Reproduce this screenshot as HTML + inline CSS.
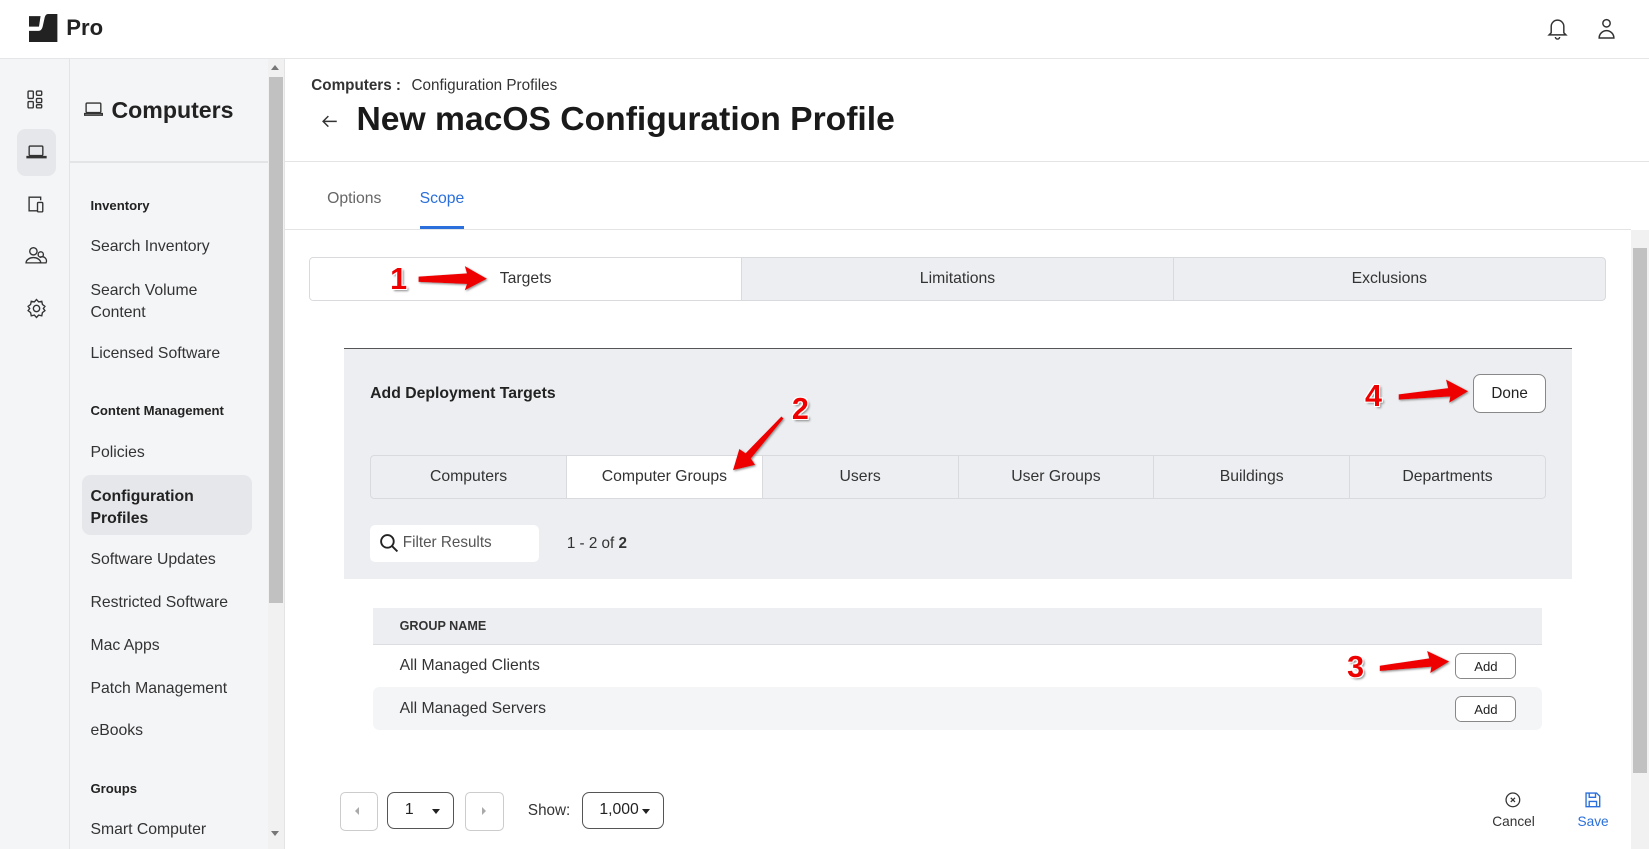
<!DOCTYPE html>
<html><head><meta charset="utf-8">
<style>
html,body{margin:0;padding:0;overflow:hidden;background:#fff}
body{width:1568px;height:807px;zoom:1.05166;position:relative;font-family:"Liberation Sans",Arial,sans-serif;color:#222}
.a{position:absolute}
.t{font-size:15px;color:#333;white-space:nowrap}
.seg{display:flex;border:1px solid #d8dadd;border-radius:4px;overflow:hidden;background:#eceef1}
.seg div{flex:1;display:flex;align-items:center;justify-content:center;font-size:15px;color:#333;border-left:1px solid #d8dadd}
.seg div:first-child{border-left:none}
.seg .on{background:#fff}
.btn{border:1px solid #888;border-radius:7px;background:#fff;display:flex;align-items:center;justify-content:center;color:#222}
.num{font:bold 29px "Liberation Sans",sans-serif;color:#e00;text-shadow:1px 1px 0 #fff,-1px -1px 0 #fff,1px -1px 0 #fff,-1px 1px 0 #fff,2px 2px 2px #888}
</style></head><body>
<!-- header -->
<div class="a" style="left:0;top:0;width:1568px;height:55px;border-bottom:1px solid #e5e6e8"></div>
<svg class="a" style="left:28px;top:13px" width="28" height="27" viewBox="0 0 28 27"><path d="M0 2H11L9.5 12H0Z" fill="#222"/><path d="M18 0H27V27H0V16H9Q12 16 13 12L15 3Q16 0 18 0Z" fill="#222"/></svg>
<div class="a" style="left:63px;top:14px;font-size:21px;font-weight:bold">Pro</div>
<svg class="a" style="left:1471px;top:16px" width="20" height="22" viewBox="0 0 20 22" fill="none" stroke="#333" stroke-width="1.4"><path d="M4 15V9a6 6 0 0112 0v6l2 2H2z"/><path d="M8 19a2 2 0 004 0"/></svg>
<svg class="a" style="left:1518px;top:16px" width="20" height="22" viewBox="0 0 20 22" fill="none" stroke="#333" stroke-width="1.4"><circle cx="10" cy="6" r="3.5"/><path d="M3 20a7 7 0 0114 0z"/></svg>
<!-- rail -->
<div class="a" style="left:0;top:56px;width:66px;height:751px;background:#f4f5f7;border-right:1px solid #e3e4e6"></div>
<div class="a" style="left:16px;top:123px;width:37px;height:44px;background:#e6e7ea;border-radius:8px"></div>
<svg class="a" style="left:26px;top:86px" width="16" height="20" viewBox="0 0 16 20" fill="none" stroke="#333" stroke-width="1.3"><rect x="1" y="1" width="5" height="7" rx="1"/><rect x="9" y="1" width="5" height="4" rx="1"/><rect x="1" y="11" width="5" height="6" rx="1"/><rect x="9" y="8" width="5" height="4" rx="1"/><rect x="9" y="14" width="5" height="3" rx="1"/></svg>
<svg class="a" style="left:25px;top:137px" width="20" height="16" viewBox="0 0 20 16" fill="none" stroke="#333" stroke-width="1.3"><rect x="3" y="2" width="13" height="9" rx="1"/><path d="M1 12h18v1H1z"/></svg>
<svg class="a" style="left:26px;top:184px" width="18" height="20" viewBox="0 0 18 20" fill="none" stroke="#333" stroke-width="1.3"><path d="M10 16H2V3h11v3"/><rect x="10" y="8" width="5" height="9" rx="1"/></svg>
<svg class="a" style="left:24px;top:233px" width="22" height="20" viewBox="0 0 22 20" fill="none" stroke="#333" stroke-width="1.3"><circle cx="8" cy="6" r="3.5"/><circle cx="15" cy="9" r="2.5"/><path d="M1 17a7 5 0 0114 0z"/><path d="M13 17h7a4 4 0 00-6-5"/></svg>
<svg class="a" style="left:25px;top:283px" width="20" height="20" viewBox="0 0 20 20" fill="none" stroke="#333" stroke-width="1.3"><circle cx="10" cy="10" r="3"/><path d="M10 1.5l2 2.2 3-.6.6 3 2.4 1.9-1.5 2 1.5 2-2.4 1.9-.6 3-3-.6-2 2.2-2-2.2-3 .6-.6-3L2 12l1.5-2L2 8l2.4-1.9.6-3 3 .6z"/></svg>
<!-- side nav -->
<div class="a" style="left:67px;top:56px;width:188px;height:751px;background:#f4f5f7"></div>
<div class="a" style="left:67px;top:153px;width:188px;height:2px;background:#e3e4e6"></div>
<svg class="a" style="left:80px;top:97px" width="18" height="14" viewBox="0 0 18 14" fill="none" stroke="#333" stroke-width="1.3"><rect x="2" y="1" width="14" height="9" rx="1"/><path d="M0.5 11h17v1.5H.5z"/></svg>
<div class="a" style="left:106px;top:92px;font-size:22px;font-weight:bold">Computers</div>
<div class="a" style="left:86px;top:188px;font-size:12.5px;font-weight:bold">Inventory</div>
<div class="a t" style="left:86px;top:226px">Search Inventory</div>
<div class="a t" style="left:86px;top:266px;line-height:21px">Search Volume<br>Content</div>
<div class="a t" style="left:86px;top:328px">Licensed Software</div>
<div class="a" style="left:86px;top:383px;font-size:12.5px;font-weight:bold">Content Management</div>
<div class="a t" style="left:86px;top:422px">Policies</div>
<div class="a" style="left:78px;top:452px;width:162px;height:57px;background:#e6e7ea;border-radius:8px"></div>
<div class="a" style="left:86px;top:462px;font-size:15px;font-weight:bold;line-height:21px">Configuration<br>Profiles</div>
<div class="a t" style="left:86px;top:524px">Software Updates</div>
<div class="a t" style="left:86px;top:565px">Restricted Software</div>
<div class="a t" style="left:86px;top:606px">Mac Apps</div>
<div class="a t" style="left:86px;top:647px">Patch Management</div>
<div class="a t" style="left:86px;top:687px">eBooks</div>
<div class="a" style="left:86px;top:743px;font-size:12.5px;font-weight:bold">Groups</div>
<div class="a t" style="left:86px;top:781px">Smart Computer</div>
<div class="a" style="left:255px;top:56px;width:15px;height:751px;background:#f1f1f1"></div>
<div class="a" style="left:256px;top:73px;width:13px;height:500px;background:#c1c1c1"></div>
<div class="a" style="left:258px;top:62px;width:0;height:0;border:4px solid transparent;border-bottom:5px solid #777;border-top:0"></div>
<div class="a" style="left:258px;top:790px;width:0;height:0;border:4px solid transparent;border-top:5px solid #777;border-bottom:0"></div>
<div class="a" style="left:270px;top:56px;width:1px;height:751px;background:#e3e4e6"></div>
<!-- main -->
<div class="a" style="left:296px;top:73px;font-size:14.5px"><b style="color:#333">Computers :</b> <span style="color:#333;margin-left:6px">Configuration Profiles</span></div>
<svg class="a" style="left:305px;top:108px" width="16" height="14" viewBox="0 0 16 14" fill="none" stroke="#333" stroke-width="1.4"><path d="M15 7H2M7 2L2 7l5 5"/></svg>
<div class="a" style="left:339px;top:96px;font-size:32px;font-weight:bold;color:#1a1a1a">New macOS Configuration Profile</div>
<div class="a" style="left:271px;top:153px;width:1297px;height:1px;background:#e3e4e6"></div>
<div class="a" style="left:311px;top:181px;font-size:15px;color:#666">Options</div>
<div class="a" style="left:399px;top:181px;font-size:15px;color:#2a6fdb">Scope</div>
<div class="a" style="left:399px;top:215px;width:42px;height:3px;background:#2a6fdb"></div>
<div class="a" style="left:271px;top:218px;width:1280px;height:1px;background:#e3e4e6"></div>
<div class="a seg" style="left:294px;top:244px;width:1231px;height:40px"><div class="on">Targets</div><div>Limitations</div><div>Exclusions</div></div>
<!-- panel -->
<div class="a" style="left:327px;top:331px;width:1168px;height:219px;background:#eceef1;border-top:1px solid #555"></div>
<div class="a" style="left:352px;top:366px;font-size:15px;font-weight:bold">Add Deployment Targets</div>
<div class="a btn" style="left:1401px;top:356px;width:67px;height:35px;font-size:14.5px">Done</div>
<div class="a seg" style="left:352px;top:433px;width:1116px;height:40px"><div>Computers</div><div class="on">Computer Groups</div><div>Users</div><div>User Groups</div><div>Buildings</div><div>Departments</div></div>
<div class="a" style="left:352px;top:499px;width:161px;height:35px;background:#fff;border-radius:5px"></div>
<svg class="a" style="left:360px;top:507px" width="20" height="20" viewBox="0 0 20 20" fill="none" stroke="#222" stroke-width="1.8"><circle cx="8" cy="8" r="6"/><path d="M12.5 12.5l5 5"/></svg>
<div class="a" style="left:383px;top:508px;font-size:14.5px;color:#555">Filter Results</div>
<div class="a" style="left:539px;top:509px;font-size:14.5px;color:#333">1 - 2 of <b>2</b></div>
<!-- table -->
<div class="a" style="left:355px;top:578px;width:1111px;height:34px;background:#eceef1;border-bottom:1px solid #dcdde0"></div>
<div class="a" style="left:380px;top:589px;font-size:12px;font-weight:bold;color:#333">GROUP NAME</div>
<div class="a t" style="left:380px;top:625px">All Managed Clients</div>
<div class="a" style="left:355px;top:653px;width:1111px;height:41px;background:#f4f5f7;border-radius:6px"></div>
<div class="a t" style="left:380px;top:666px">All Managed Servers</div>
<div class="a btn" style="left:1384px;top:621px;width:56px;height:23px;font-size:12.5px;border-radius:6px">Add</div>
<div class="a btn" style="left:1384px;top:662px;width:56px;height:23px;font-size:12.5px;border-radius:6px">Add</div>
<!-- pagination -->
<div class="a" style="left:323px;top:753px;width:35px;height:35px;border:1px solid #ccc;border-radius:5px"></div>
<div class="a" style="left:338px;top:767px;border:4px solid transparent;border-right:4px solid #aaa;border-left:0"></div>
<div class="a btn" style="left:368px;top:753px;width:64px;height:35px;border-color:#555;font-size:15px;justify-content:flex-start;padding-left:16px;box-sizing:border-box">1</div>
<div class="a" style="left:411px;top:769px;border:4px solid transparent;border-top:5px solid #222;border-bottom:0"></div>
<div class="a" style="left:442px;top:753px;width:35px;height:35px;border:1px solid #ccc;border-radius:5px"></div>
<div class="a" style="left:458px;top:767px;border:4px solid transparent;border-left:4px solid #aaa;border-right:0"></div>
<div class="a" style="left:502px;top:763px;font-size:14.5px;color:#333">Show:</div>
<div class="a btn" style="left:553px;top:753px;width:78px;height:35px;border-color:#555;font-size:15px;justify-content:flex-start;padding-left:16px;box-sizing:border-box">1,000</div>
<div class="a" style="left:610px;top:769px;border:4px solid transparent;border-top:5px solid #222;border-bottom:0"></div>
<svg class="a" style="left:1431px;top:753px" width="15" height="15" viewBox="0 0 15 15" fill="none" stroke="#333" stroke-width="1.2"><circle cx="7.5" cy="7.5" r="6.5"/><path d="M5.5 5.5l4 4M9.5 5.5l-4 4"/></svg>
<div class="a" style="left:1419px;top:774px;font-size:13px;color:#333">Cancel</div>
<svg class="a" style="left:1507px;top:753px" width="15" height="15" viewBox="0 0 15 15" fill="none" stroke="#2a6fdb" stroke-width="1.3"><path d="M1 1h10l3 3v10H1z"/><path d="M4 1v4h6V1M4 14V9h7v5"/></svg>
<div class="a" style="left:1500px;top:774px;font-size:13px;color:#2a6fdb">Save</div>
<!-- right scrollbar -->
<div class="a" style="left:1551px;top:219px;width:17px;height:588px;background:#f1f1f1"></div>
<div class="a" style="left:1553px;top:236px;width:13px;height:499px;background:#c1c1c1"></div>
<!-- annotations -->
<svg class="a" style="left:0;top:0;overflow:visible" width="1568" height="807">
<defs><filter id="s"><feDropShadow dx="1" dy="1" stdDeviation="1" flood-color="#888"/></filter></defs>
<g fill="#ee0000" filter="url(#s)">
<polygon points="398,263 444,260 442,253 463,265 442,276 444,270 398,268"/>
<polygon points="1312,633 1359,626 1357,619 1378,629 1360,640 1361,634 1312,638"/>
<polygon points="1330,375 1377,369 1375,361 1396,372 1378,383 1379,377 1330,380"/>
<polygon points="745,398 714,436 718,442 697,447 703,427 709,431 743,396"/>
</g></svg>
<div class="a num" style="left:371px;top:249px">1</div>
<div class="a num" style="left:753px;top:373px">2</div>
<div class="a num" style="left:1281px;top:618px">3</div>
<div class="a num" style="left:1298px;top:360px">4</div>
</body></html>
